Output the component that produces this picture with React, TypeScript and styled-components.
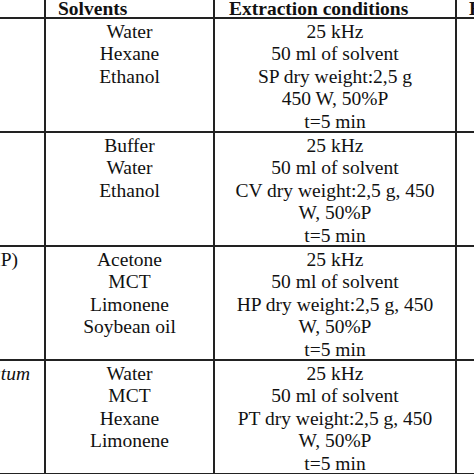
import React from 'react';
import styled, { createGlobalStyle } from 'styled-components';

const GlobalStyle = createGlobalStyle`
  html, body {
    margin: 0;
    padding: 0;
    background: #ffffff;
    overflow: hidden;
  }
`;

const Viewport = styled.div`
  width: 474px;
  height: 474px;
  overflow: hidden;
  background: #ffffff;
`;

const Table = styled.div`
  display: grid;
  grid-template-columns: 246px 169px 242px 100px;
  grid-auto-rows: auto;
  margin-left: -200px;
  margin-top: -5px;
  font-family: "Liberation Serif", "Times New Roman", serif;
  font-size: 19.5px;
  line-height: 22.4px;
  color: #111;
`;

const Cell = styled.div`
  box-sizing: border-box;
  border-right: 2px solid #222;
  border-bottom: 2px solid #222;
  overflow: hidden;
  white-space: nowrap;
`;

const HeadCell = styled(Cell)<{ $inset: number }>`
  height: 24px;
  padding-top: 3px;
  font-weight: bold;
  padding-left: ${(p) => p.$inset}px;
`;

const BodyCell = styled(Cell)`
  height: 114px;
  padding-top: 2px;
  text-align: center;
`;

const NameCell = styled(Cell)<{ $endInset: number }>`
  height: 114px;
  padding-top: 2px;
  text-align: right;
  padding-right: ${(p) => p.$endInset}px;
`;

const Line = styled.div``;

const Species = styled.span<{ $italic?: boolean }>`
  font-style: ${(p) => (p.$italic ? 'italic' : 'normal')};
`;

type Row = {
  name: React.ReactNode;
  endInset: number;
  solvents: string[];
  conditions: string[];
};

const rows: Row[] = [
  {
    name: '',
    endInset: 14,
    solvents: ['Water', 'Hexane', 'Ethanol'],
    conditions: ['25 kHz', '50 ml of solvent', 'SP dry weight:2,5 g', '450 W, 50%P', 't=5 min'],
  },
  {
    name: '',
    endInset: 14,
    solvents: ['Buffer', 'Water', 'Ethanol'],
    conditions: ['25 kHz', '50 ml of solvent', 'CV dry weight:2,5 g, 450', 'W, 50%P', 't=5 min'],
  },
  {
    name: 'Hemp seed (HP)',
    endInset: 26,
    solvents: ['Acetone', 'MCT', 'Limonene', 'Soybean oil'],
    conditions: ['25 kHz', '50 ml of solvent', 'HP dry weight:2,5 g, 450', 'W, 50%P', 't=5 min'],
  },
  {
    name: <Species $italic>Punica granatum</Species>,
    endInset: 14,
    solvents: ['Water', 'MCT', 'Hexane', 'Limonene'],
    conditions: ['25 kHz', '50 ml of solvent', 'PT dry weight:2,5 g, 450', 'W, 50%P', 't=5 min'],
  },
];

const App: React.FC = () => {
  return (
    <Viewport>
      <GlobalStyle />
      <Table>
        <HeadCell $inset={12}>Samples</HeadCell>
        <HeadCell $inset={12}>Solvents</HeadCell>
        <HeadCell $inset={14}>Extraction conditions</HeadCell>
        <HeadCell $inset={12}>Extraction yield</HeadCell>

        {rows.map((row, i) => (
          <React.Fragment key={i}>
            <NameCell $endInset={row.endInset}>{row.name}</NameCell>
            <BodyCell>
              {row.solvents.map((s) => (
                <Line key={s}>{s}</Line>
              ))}
            </BodyCell>
            <BodyCell>
              {row.conditions.map((c) => (
                <Line key={c}>{c}</Line>
              ))}
            </BodyCell>
            <BodyCell />
          </React.Fragment>
        ))}
      </Table>
    </Viewport>
  );
};

export default App;
